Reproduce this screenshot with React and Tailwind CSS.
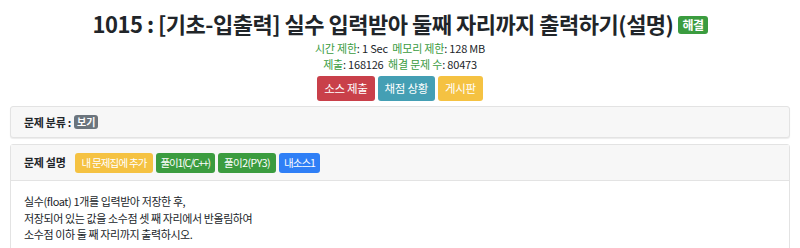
export default function App() {
  const font = { fontFamily: '"Noto Sans CJK KR", "Noto Sans", sans-serif' };
  return (
    <div className="w-[800px] h-[248px] overflow-hidden bg-white text-[#212529]" style={font}>
      <div className="flex flex-col items-center pt-[7px]">
        <div className="flex items-center gap-[5px]">
          <h1 className="text-[22px] leading-[32px] font-bold tracking-[-0.5px]">1015 : [기초-입출력] 실수 입력받아 둘째 자리까지 출력하기(설명)</h1>
          <span className="mt-[4px] bg-[#3b9c3f] text-white text-[12px] font-bold leading-[18px] px-[4px] rounded-[3px] tracking-[-0.5px]">해결</span>
        </div>
        <div className="text-[11px] leading-[16px] mt-[1px] tracking-[-0.2px]">
          <span className="text-[#3b9c3f]">시간 제한</span>: 1 Sec&nbsp;&nbsp;<span className="text-[#3b9c3f]">메모리 제한</span>: 128 MB
        </div>
        <div className="text-[11px] leading-[16px] tracking-[-0.2px]">
          <span className="text-[#3b9c3f]">제출</span>: 168126&nbsp;&nbsp;<span className="text-[#3b9c3f]">해결 문제 수</span>: 80473
        </div>
        <div className="flex gap-[3px] mt-[4px]">
          <button className="h-[25px] px-[7px] rounded-[3px] bg-[#c9404a] text-white text-[11.5px] tracking-[-0.3px]">소스 제출</button>
          <button className="h-[25px] px-[7px] rounded-[3px] bg-[#449fb4] text-white text-[11.5px] tracking-[-0.3px]">채점 상황</button>
          <button className="h-[25px] px-[7px] rounded-[3px] bg-[#f5c242] text-white text-[11.5px] tracking-[-0.3px]">게시판</button>
        </div>
      </div>
      <div className="mx-[10px] mt-[5px] border border-[#e3e3e3] bg-[#f7f7f7] rounded-[3px] h-[32px] flex items-center px-[13px] shadow-[0_1px_1px_rgba(0,0,0,0.08)]">
        <span className="text-[11px] font-bold tracking-[-0.3px]">문제 분류 :</span>
        <span className="ml-[3px] bg-[#6c757d] text-white text-[10px] font-bold leading-[14px] px-[3px] rounded-[3px]">보기</span>
      </div>
      <div className="mx-[10px] mt-[6px] border border-[#e3e3e3] rounded-[3px]">
        <div className="h-[36px] bg-[#f7f7f7] border-b border-[#e3e3e3] flex items-center px-[13px] gap-[3px]">
          <span className="text-[11px] font-bold mr-[7px] tracking-[-0.3px]">문제 설명</span>
          <span className="bg-[#f5c242] text-white text-[10.5px] leading-[20px] px-[6px] rounded-[3px] tracking-[-0.8px]">내 문제집에 추가</span>
          <span className="bg-[#3b9c3f] text-white text-[10.5px] leading-[20px] px-[5px] rounded-[3px] tracking-[-1.2px]">풀이1(C/C++)</span>
          <span className="bg-[#3b9c3f] text-white text-[10.5px] leading-[20px] px-[6px] rounded-[3px] tracking-[-0.5px]">풀이2(PY3)</span>
          <span className="bg-[#2f7ff6] text-white text-[10.5px] leading-[20px] px-[5px] rounded-[3px] tracking-[-1px]">내소스1</span>
        </div>
        <div className="px-[13px] pt-[12px] pb-[20px] text-[11px] leading-[16.5px] tracking-[-0.4px]">
          <p>실수(float) 1개를 입력받아 저장한 후,</p>
          <p>저장되어 있는 값을 소수점 셋 째 자리에서 반올림하여</p>
          <p>소수점 이하 둘 째 자리까지 출력하시오.</p>
        </div>
      </div>
    </div>
  );
}
